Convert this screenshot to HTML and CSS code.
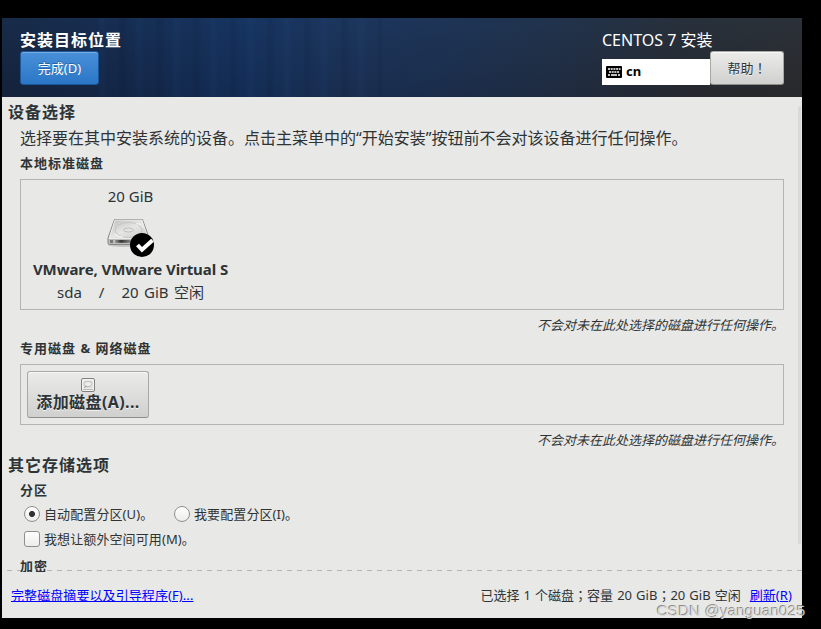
FILE: index.html
```
<!DOCTYPE html>
<html lang="zh-CN">
<head>
    <meta charset="UTF-8">
    <meta name="viewport" content="width=device-width, initial-scale=1.0">
    <title>安装目标位置</title>
    <link rel="stylesheet" href="styles.css">
</head>
<body>
    <div class="window">
        <header class="header">
            <div class="header-left">
                <h1 class="title">安装目标位置</h1>
                <button class="button done">完成(D)</button>
            </div>
            <div class="header-right">
                <div class="product">CENTOS 7 安装</div>
                <div class="header-tools">
                    <div class="keyboard">
                        <svg width="16" height="12" viewBox="0 0 16 12">
                            <rect width="16" height="12" rx="1" fill="#000"/>
                            <path d="M2 3h12.500" stroke="#fff" stroke-width="1.600" stroke-dasharray="2 .7"/>
                            <path d="M3 6h10.500" stroke="#fff" stroke-width="1.600" stroke-dasharray="2 .7"/>
                            <path d="M2 9h2M5 9h6M12 9h2" stroke="#fff" stroke-width="1.600"/>
                        </svg>
                        <span>cn</span>
                    </div>
                    <button class="button help"><span>帮助<span class="mark" lang="zh-TW">！</span></span></button>
                </div>
            </div>
        </header>

        <main class="content">
            <h2 class="section-title">设备选择</h2>
            <p class="intro">选择要在其中安装系统的设备。点击主菜单中的“开始安装”按钮前不会对该设备进行任何操作。</p>
            <h3 class="sub-title">本地标准磁盘</h3>
            <div class="panel local">
                <div class="disk">
                    <div class="disk-size">20 GiB</div>
                    <svg class="disk-icon" width="48" height="42" viewBox="0 0 48 42">
                        <defs>
                            <linearGradient id="top" x1="0" y1="0" x2="1" y2="1">
                                <stop offset="0" stop-color="#bfbfbd"/>
                                <stop offset=".5" stop-color="#e6e6e5"/>
                                <stop offset="1" stop-color="#c6c6c4"/>
                            </linearGradient>
                            <linearGradient id="front" x1="0" y1="0" x2="1" y2="0">
                                <stop offset="0" stop-color="#999"/>
                                <stop offset=".3" stop-color="#333"/>
                                <stop offset="1" stop-color="#aaa"/>
                            </linearGradient>
                        </defs>
                        <ellipse cx="22" cy="29" rx="21" ry="2" fill="#000" opacity=".15"/>
                        <path d="M7.500 3.500h28L42 22v5q0 1.500-1.500 1.500h-38Q1 28.500 1 27v-5z" fill="#bdbdbb" stroke="#858583"/>
                        <path d="M8 4h27l6 18.500H2z" fill="url(#top)" stroke="#f4f4f3" stroke-width=".8"/>
                        <ellipse cx="21.500" cy="14" rx="13.500" ry="7.500" fill="none" stroke="#c0c0be" stroke-width=".8"/>
                        <ellipse cx="21.500" cy="14" rx="5" ry="2" fill="#e4e4e2" stroke="#b4b4b2" stroke-width=".8"/>
                        <path d="M29 8q6-1 7 4M8 18q2 3 8 3" fill="none" stroke="#f8f8f8"/>
                        <rect x="8" y="24" width="20" height="2.800" fill="url(#front)"/>
                        <path d="M3 24h3v3H3z" fill="#777"/>
                        <circle cx="35" cy="29" r="12" fill="#000"/>
                        <path d="M30.500 29l4.500 4.800 10.500-9.500" fill="none" stroke="#fff" stroke-width="4"/>
                    </svg>
                    <div class="disk-name">VMware, VMware Virtual S</div>
                    <div class="disk-info">
                        <span>sda</span>
                        <span>/</span>
                        <span>20 GiB 空闲</span>
                    </div>
                </div>
            </div>
            <p class="note">不会对未在此处选择的磁盘进行任何操作。</p>

            <h3 class="sub-title network-title">专用磁盘 &amp; 网络磁盘</h3>
            <div class="panel network">
                <button class="button add">
                    <svg width="14" height="14" viewBox="0 0 14 14">
                        <rect x=".5" y=".5" width="13" height="13" rx="1.500" fill="#f3f3f2" stroke="#7f7f7d"/>
                        <rect x="2.500" y="2.500" width="9" height="8" fill="#dededc"/>
                        <ellipse cx="7" cy="6" rx="4" ry="2.600" fill="#eee" stroke="#b5b5b3" stroke-width=".8"/>
                        <path d="M2 11.500h10" stroke="#bbb"/>
                        <path d="M3 9.500l3-1.500" stroke="#999" stroke-width=".8"/>
                    </svg>
                    <span>添加磁盘(A)...</span>
                </button>
            </div>
            <p class="note">不会对未在此处选择的磁盘进行任何操作。</p>

            <h2 class="section-title storage-title">其它存储选项</h2>
            <h3 class="sub-title part-title">分区</h3>
            <div class="options">
                <label class="option auto"><i class="radio checked"></i><span>自动配置分区(U)。</span></label>
                <label class="option"><i class="radio"></i><span>我要配置分区(I)。</span></label>
            </div>
            <div class="options">
                <label class="option"><i class="checkbox"></i><span>我想让额外空间可用(M)。</span></label>
            </div>
            <h3 class="sub-title encrypt-title">加密</h3>
            <div class="scrollbar"></div>
        </main>

        <footer class="footer">
            <a class="link summary" href="#">完整磁盘摘要以及引导程序(F)...</a>
            <span class="status">已选择 1 个磁盘<span class="mark" lang="zh-TW">；</span>容量 20 GiB<span class="mark" lang="zh-TW">；</span>20 GiB 空闲</span>
            <a class="link refresh" href="#">刷新(R)</a>
        </footer>
    </div>
    <div class="watermark">CSDN @yanguan025</div>
</body>
</html>
```
FILE: styles.css
```
* {
    box-sizing: border-box;
}
body {
    margin: 0;
    padding: 18px 0 0 2px;
    height: 629px;
    overflow: hidden;
    background: #000;
    color: #2e3436;
    font-family: "Noto Sans", "Noto Sans CJK SC", sans-serif;
    font-size: 13px;
}
h1, h2, h3, p {
    margin: 0;
    white-space: nowrap;
}
.window {
    width: 800px;
    height: 600px;
    display: flex;
    flex-direction: column;
    background: #e8e8e6;
}
/* punctuation centered in its cell */
.mark {
    font-family: "Noto Sans CJK TC", sans-serif;
    line-height: 1;
}

/* header */
.header {
    height: 79px;
    display: flex;
    justify-content: space-between;
    padding: 11px 18px 0;
    background:
        repeating-linear-gradient(90deg, transparent 0 5px, rgba(50, 110, 180, 0.05) 9px 11px, transparent 16px 25px, rgba(0, 0, 20, 0.07) 29px 31px, transparent 37px) 90px 0 / 290px 100% no-repeat,
        linear-gradient(180deg, rgba(30, 80, 140, 0.12), rgba(0, 0, 20, 0.1)),
        linear-gradient(90deg, #17263f 0, #152a4c 130px, #15315b 240px, #1b3257 330px, #1e314f 450px, #222f43 560px, #292c31 680px, #2d2d2d 800px);
}
.title {
    height: 22px;
    line-height: 22px;
    font-size: 16px;
    letter-spacing: 1px;
    color: #fff;
}
.product {
    height: 22px;
    line-height: 22px;
    font-size: 16px;
    color: #fff;
}
.header-tools {
    display: flex;
    align-items: flex-end;
}
.keyboard {
    width: 108px;
    height: 26px;
    display: flex;
    align-items: center;
    gap: 4px;
    padding-left: 4px;
    background: #fff;
    color: #000;
    font-weight: bold;
}
.keyboard span {
    padding-bottom: 2px;
}
.button {
    display: flex;
    align-items: center;
    justify-content: center;
    height: 34px;
    padding: 0 0 2px;
    border: 1px solid #a8a8a4;
    border-bottom-color: #8d8d89;
    border-radius: 3px;
    background: linear-gradient(#ebebea, #d0d0ce);
    box-shadow: inset 0 1px #f8f8f8;
    color: #2e3436;
    font-family: inherit;
    font-size: 13px;
    text-shadow: 0 1px #f4f4f4;
    white-space: nowrap;
}
.done {
    width: 79px;
    border-color: #1c5799;
    background: linear-gradient(#4a90d9, #2a76c6);
    box-shadow: inset 0 1px #76ace4;
    color: #fff;
    text-shadow: 0 -1px #2464a8;
}
.help {
    width: 74px;
}

/* scrolled part, the dashed line runs behind the clipped last row */
.content {
    position: relative;
    height: 475px;
    overflow: hidden;
    padding: 2px 18px 0;
    background: repeating-linear-gradient(90deg, #b4b4b1 0 5px, transparent 5px 10px) 5px 473px / 795px 1px no-repeat;
}
.section-title {
    height: 26px;
    line-height: 26px;
    margin-left: -12px;
    font-size: 16px;
    letter-spacing: 1px;
}
.intro {
    height: 26px;
    line-height: 26px;
    font-size: 16px;
}
.sub-title {
    height: 26px;
    line-height: 25px;
    font-size: 13px;
    letter-spacing: 1px;
}
.panel {
    border: 1px solid #b4b4b1;
}
.local {
    height: 131px;
    margin-top: 2px;
    padding: 5px 12px;
}
.disk {
    width: 195px;
    display: flex;
    flex-direction: column;
    align-items: center;
    font-size: 15px;
}
.disk-size {
    height: 22px;
    line-height: 22px;
}
.disk-icon {
    margin: 9px 0 0;
}
.disk-name {
    height: 23px;
    line-height: 23px;
    font-weight: bold;
    letter-spacing: -0.08px;
    white-space: nowrap;
}
.disk-info {
    display: flex;
    gap: 17px;
    line-height: 23px;
    word-spacing: 1.5px;
    white-space: nowrap;
}
.note {
    height: 30px;
    line-height: 30px;
    text-align: right;
    font-style: italic;
}
.network-title {
    height: 24px;
    line-height: 17px;
}
.network {
    height: 61px;
    padding: 6px;
}
.add {
    width: 122px;
    height: 47px;
    padding: 0;
    flex-direction: column;
    font-size: 16px;
    font-weight: bold;
    letter-spacing: 0.4px;
    line-height: 20px;
}
.storage-title {
    height: 20px;
    line-height: 20px;
    margin-bottom: 3px;
}
.part-title {
    height: 23px;
}
.options {
    display: flex;
    height: 25px;
    padding-left: 4px;
}
.option {
    display: flex;
    align-items: center;
    gap: 4px;
    letter-spacing: 0.1px;
    white-space: nowrap;
}
.auto {
    width: 150px;
}
.radio, .checkbox {
    width: 16px;
    height: 16px;
    border: 1px solid #8f8f8b;
    border-radius: 3px;
    background: linear-gradient(#fff, #ececeb);
}
.radio {
    border-radius: 50%;
}
.checked {
    background: radial-gradient(circle, #2e3436 2.600px, transparent 3.400px), linear-gradient(#fff, #ececeb);
}
.encrypt-title {
    margin-top: 3px;
}
.scrollbar {
    position: absolute;
    top: 9px;
    right: 1px;
    width: 3px;
    height: 438px;
    border-radius: 2px;
    background: #d9dadb;
}

/* footer */
.footer {
    height: 46px;
    display: flex;
    align-items: center;
    padding: 0 10px 2px 9px;
    white-space: nowrap;
}
.status {
    margin-left: auto;
    margin-right: 9px;
    word-spacing: 0.7px;
}
.link {
    color: #00f;
    letter-spacing: 0.08px;
}
.watermark {
    position: absolute;
    left: 657px;
    top: 601px;
    font-family: "Liberation Sans", Arial, sans-serif;
    font-size: 15.4px;
    line-height: 20px;
    color: rgba(215, 215, 215, 0.9);
    text-shadow: -1px -1px rgba(100, 100, 100, 0.7);
    white-space: nowrap;
}
```
